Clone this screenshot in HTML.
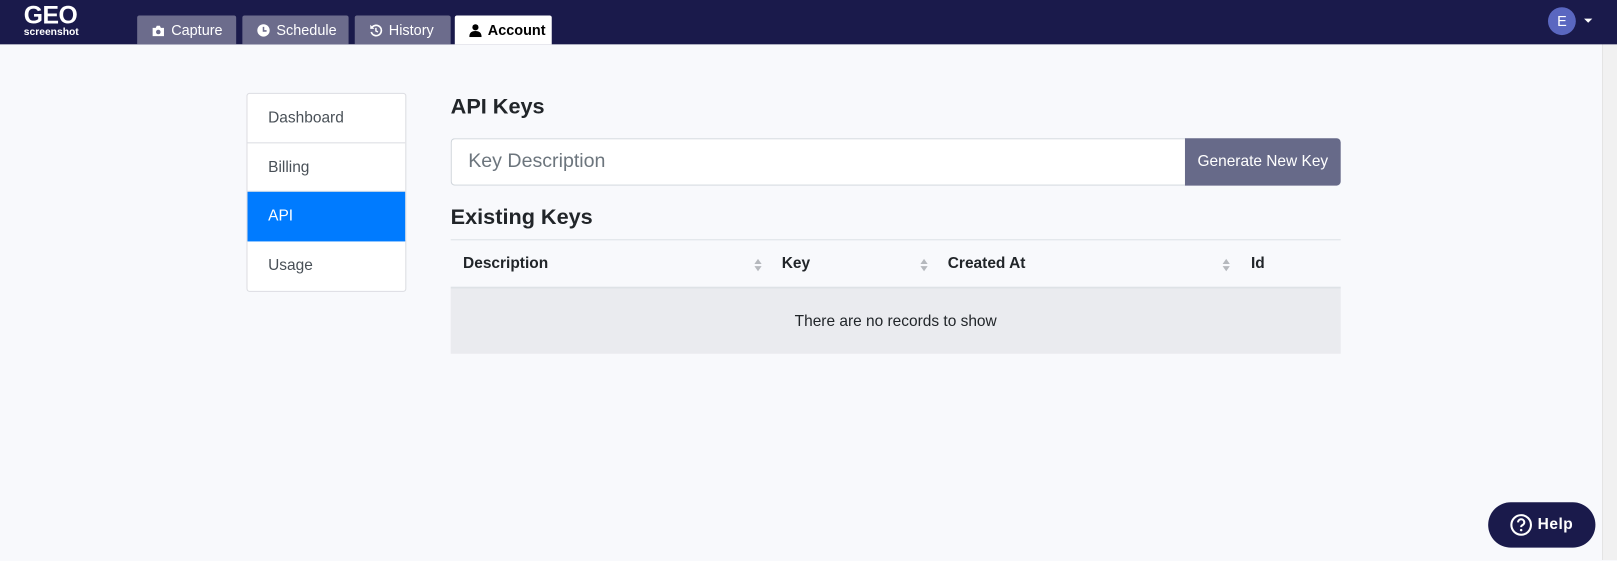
<!DOCTYPE html>
<html><head><style>
*{box-sizing:border-box;margin:0;padding:0}
body{width:1617px;height:560px;overflow:hidden;background:#f8f9fc;font-family:"Liberation Sans",sans-serif;color:#212529;position:relative}
#w{position:absolute;left:0;top:0;width:1568px;height:544px;transform:scale(1.0313);transform-origin:0 0}
.nav{position:absolute;left:0;top:0;width:1568px;height:43px;background:#1a1a4b}
.logo{position:absolute;left:23px;top:4px;color:#fff;font-weight:bold}
.logo .g{font-size:24px;line-height:24px;letter-spacing:-0.5px}
.logo .s{font-size:10px;line-height:10px;margin-top:-1px}
.tab{position:absolute;top:15px;height:28px;background:#6c6c8c;color:#fff;font-size:14px;line-height:28px;padding-left:14px;border-radius:2px 2px 0 0}
.tab svg{vertical-align:-2px;margin-right:6px}
.tab.act{background:#fff;color:#000;font-weight:bold}
.av{position:absolute;left:1501px;top:7px;width:27px;height:27px;border-radius:50%;background:#5a67c0;color:#fff;font-size:14px;text-align:center;line-height:27px}
.caret{position:absolute;left:1536px;top:18px;border-left:4px solid transparent;border-right:4px solid transparent;border-top:4px solid #fff}
.scroll{position:absolute;left:1602px;top:44px;width:15px;height:516px;background:#f1f1f1;border-left:1px solid #e4e4e4}
.side{position:absolute;left:239px;top:90px;width:155px;border:1px solid #dcdde2;border-radius:3px;background:#fff;overflow:hidden}
.side div{height:47.7px;line-height:47px;padding-left:20px;font-size:15px;color:#495057;border-bottom:1px solid #dcdde2}
.side div:last-child{border-bottom:none}
.side .a{background:#007bff;color:#fff;border-color:#007bff}
h2{position:absolute;left:437px;font-size:21px;font-weight:bold;color:#212529}
.inp{position:absolute;left:437px;top:134px;width:713px;height:46px;border:1px solid #ced4da;border-right:none;border-radius:4px 0 0 4px;background:#fff;font-size:19px;color:#6c757d;line-height:44px;padding-left:16px}
.btn{position:absolute;left:1149px;top:134px;width:151px;height:46px;background:#676a89;color:#fff;font-size:15px;line-height:46px;text-align:center;border-radius:0 4px 4px 0}
.th{position:absolute;left:437px;top:232px;width:863px;height:48px;border-top:1px solid #dee2e6;border-bottom:2px solid #dee2e6}
.th span{position:absolute;top:14px;font-size:15px;font-weight:bold}
.sort{position:absolute;top:17px;width:8px;height:14px}
.empty{position:absolute;left:437px;top:280px;width:863px;height:63px;background:#eaebef;text-align:center;line-height:63px;font-size:15px}
.help{position:absolute;left:1443px;top:487px;width:104px;height:44px;border-radius:22px;background:#1a1a4b;color:#fff;font-weight:bold;font-size:15px;line-height:44px;padding-left:48px;letter-spacing:0.5px}
.help svg{position:absolute;left:21px;top:11px}
</style></head><body>
<div class="scroll"></div>
<div id="w">
<div class="nav">
<div class="logo"><div class="g">GEO</div><div class="s">screenshot</div></div>
<div class="tab" style="left:133px;width:96px"><svg width="13" height="12" viewBox="0 0 13 12"><path d="M1 3h3l1-2h3l1 2h3v8H1z" fill="#fff"/><circle cx="6.5" cy="7" r="2.2" fill="#6c6c8c"/></svg>Capture</div>
<div class="tab" style="left:235px;width:103px"><svg width="13" height="13" viewBox="0 0 13 13"><circle cx="6.5" cy="6.5" r="6" fill="#fff"/><path d="M6.5 3v4h3" stroke="#6c6c8c" stroke-width="1.5" fill="none"/></svg>Schedule</div>
<div class="tab" style="left:344px;width:93px"><svg width="13" height="13" viewBox="0 0 13 13"><path d="M2.5 4A5 5 0 1 1 2 8" stroke="#fff" stroke-width="1.6" fill="none"/><path d="M1 1v4h4z" fill="#fff"/><path d="M6.5 4v3l2 1" stroke="#fff" stroke-width="1.4" fill="none"/></svg>History</div>
<div class="tab act" style="left:441px;width:94px"><svg width="12" height="13" viewBox="0 0 12 13"><circle cx="6" cy="3.5" r="3" fill="#000"/><path d="M0 13c0-4 2-6 6-6s6 2 6 6z" fill="#000"/></svg>Account</div>
<div class="av">E</div><div class="caret"></div>
</div>
<div class="side"><div>Dashboard</div><div>Billing</div><div class="a">API</div><div>Usage</div></div>
<h2 style="top:92px">API Keys</h2>
<div class="inp">Key Description</div>
<div class="btn">Generate New Key</div>
<h2 style="top:199px">Existing Keys</h2>
<div class="th">
<span style="left:12px">Description</span><svg class="sort" style="left:294px" viewBox="0 0 8 14"><path d="M4 1l3.5 5h-7zM4 13l3.5-5h-7z" fill="#b5b8bd"/></svg>
<span style="left:321px">Key</span><svg class="sort" style="left:455px" viewBox="0 0 8 14"><path d="M4 1l3.5 5h-7zM4 13l3.5-5h-7z" fill="#b5b8bd"/></svg>
<span style="left:482px">Created At</span><svg class="sort" style="left:748px" viewBox="0 0 8 14"><path d="M4 1l3.5 5h-7zM4 13l3.5-5h-7z" fill="#b5b8bd"/></svg>
<span style="left:776px">Id</span>
</div>
<div class="empty">There are no records to show</div>
<div class="help"><svg width="22" height="22" viewBox="0 0 22 22"><circle cx="11" cy="11" r="9.5" stroke="#fff" stroke-width="2" fill="none"/><path d="M8 8.5a3 3 0 1 1 4 2.8c-.8.4-1 1-1 1.8" stroke="#fff" stroke-width="2" fill="none"/><circle cx="11" cy="16" r="1.2" fill="#fff"/></svg>Help</div>
</div>
</body></html>
